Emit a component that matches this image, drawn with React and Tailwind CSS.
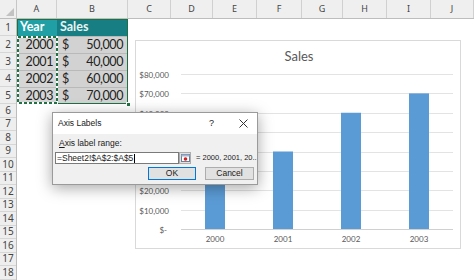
const cols = [
  ["A", "w-[40px]"],
  ["B", "w-[71px]"],
  ["C", "w-[43px]"],
  ["D", "w-[42px]"],
  ["E", "w-[44px]"],
  ["F", "w-[45px]"],
  ["G", "w-[41px]"],
  ["H", "w-[44px]"],
  ["I", "w-[44px]"],
  ["J", "w-[43px]"],
];

const data = [
  ["2000", "50,000", 50000],
  ["2001", "40,000", 40000],
  ["2002", "60,000", 60000],
  ["2003", "70,000", 70000],
];

const rowNums = Array.from({ length: 18 }, (_, i) => i + 1);

function SalesChart() {
  const labels = ["$80,000", "$70,000", "$60,000", "$50,000", "$40,000", "$30,000", "$20,000", "$10,000", "$-"];
  const step = 19.375;
  const base = 33 + 8 * step;
  return (
    <svg width="326" height="209" className="block" style={{ fontFamily: "Lato, 'Open Sans', sans-serif" }}>
      <text x="163" y="20" textAnchor="middle" fontSize="13" fill="#595959">
        Sales
      </text>
      {labels.map((l, i) => {
        const y = Math.round(33 + i * step) + 0.5;
        return (
          <g key={l}>
            <line x1="45" x2="317" y1={y} y2={y} stroke={i === 8 ? "#d0d0d0" : "#e3e3e3"} strokeWidth="1" />
            <text x={i === 8 ? 31 : 33} y={y + 3} textAnchor="end" fontSize="8" fill="#595959">
              {l}
            </text>
          </g>
        );
      })}
      {data.map(([year, , v], i) => {
        const cx = 79 + i * 68;
        const h = (v / 80000) * 155;
        return (
          <g key={year}>
            <rect x={cx - 10} y={base - h} width="20" height={h} fill="#5b9bd5" />
            <text x={cx} y="201" textAnchor="middle" fontSize="8" fill="#595959">
              {year}
            </text>
          </g>
        );
      })}
    </svg>
  );
}

function AxisDialog() {
  return (
    <div
      className="absolute left-[52px] top-[112px] w-[206px] h-[73px] flex flex-col border border-[#9a9a9a] bg-white shadow-[0_3px_14px_rgba(0,0,0,0.35)] text-[#1a1a1a]"
      style={{ fontFamily: "'Liberation Sans', Arial, sans-serif" }}
    >
      <div className="h-[21px] flex items-center pl-[5px] pr-[9px] text-[8.5px]">
        <span className="flex-1">Axis Labels</span>
        <span className="mr-[25px] text-[9px]">?</span>
        <svg width="9" height="9" viewBox="0 0 9 9">
          <path d="M0.5 0.5 L8.5 8.5 M8.5 0.5 L0.5 8.5" stroke="#333" strokeWidth="1" />
        </svg>
      </div>
      <div className="flex-1 bg-[#f0f0f0] flex flex-col pl-[2px] pt-[3px] overflow-hidden">
        <div className="pl-[4px] h-[12px] text-[8.5px] leading-[12px]">
          <span className="underline">A</span>xis label range:
        </div>
        <div className="flex items-center mt-[3px] h-[12px] shrink-0">
          <div className="w-[124px] h-[12px] shrink-0 bg-white border border-[#7a7a7a] flex items-center pl-[1px] text-[8.5px] leading-none">
            =Sheet2!$A$2:$A$5
            <span className="ml-[1px] w-px h-[9px] bg-black" />
          </div>
          <div className="w-[12px] h-[12px] shrink-0 border border-[#adadad] bg-[#e1e1e1] flex items-center justify-center">
            <svg width="9" height="8" viewBox="0 0 9 8">
              <rect x="0.5" y="0.5" width="8" height="7" fill="#fff" stroke="#6b7f99" />
              <rect x="0.5" y="0.5" width="8" height="2" fill="#9fb6d4" />
              <circle cx="4.5" cy="5" r="1.8" fill="#d42020" />
            </svg>
          </div>
          <span className="ml-[5px] text-[7.5px] leading-none whitespace-nowrap">= 2000, 2001, 20..</span>
        </div>
        <div className="flex mt-[3px] ml-[93px] gap-[9px] text-[8.5px] leading-none">
          <div className="w-[48px] h-[13px] border border-[#0078d7] bg-[#e1e1e1] flex items-center justify-center">OK</div>
          <div className="w-[49px] h-[13px] border border-[#adadad] bg-[#e1e1e1] flex items-center justify-center">Cancel</div>
        </div>
      </div>
    </div>
  );
}

export default function App() {
  return (
    <div className="relative w-[474px] h-[280px] overflow-hidden bg-white" style={{ fontFamily: "Lato, 'Open Sans', sans-serif" }}>
      {/* column headers */}
      <div className="flex h-[19px] bg-[#efefef] border-b border-[#bdbdbd] text-[9px] text-[#444]" style={{ fontFamily: "'Noto Sans', sans-serif" }}>
        <div className="w-[17px] border-r border-[#c6c6c6] relative">
          <svg width="8" height="8" className="absolute right-[2px] bottom-[2px]">
            <path d="M8 0 L8 8 L0 8 Z" fill="#c2c2c2" />
          </svg>
        </div>
        {cols.map(([c, w]) => (
          <div key={c} className={`${w} flex items-center justify-center border-r border-[#d0d0d0]`}>
            {c}
          </div>
        ))}
      </div>

      <div className="flex">
        {/* row headers */}
        <div className="w-[17px] flex flex-col bg-[#eeeeee] border-r border-[#bdbdbd] text-[10px] text-[#444]" style={{ fontFamily: "'Noto Sans', sans-serif" }}>
          {rowNums.map((n) => (
            <div
              key={n}
              className={`${n <= 5 ? "h-[17px]" : "h-[13.5px]"} flex items-center justify-center border-b border-[#d6d6d6]`}
            >
              {n}
            </div>
          ))}
        </div>

        {/* data block A1:B5 */}
        <div className="relative w-[111px] h-[85px] grid grid-cols-[40px_71px] grid-rows-[17px_repeat(4,17px)] text-[12.5px] tracking-[-0.4px] text-[#222]">
          <div className="bg-[#20a0a5] text-white font-bold flex items-center pl-[3px] tracking-normal">Year</div>
          <div className="bg-[#177f84] text-[#e8f4f4] font-bold flex items-center pl-[3px] tracking-normal">Sales</div>
          {data.map(([y, s]) => (
            <div key={y} className="contents">
              <div className="bg-[#d6d6d6] border-t border-[#b9b9b9] flex items-center justify-end pr-[4px]">{y}</div>
              <div className="bg-[#d2d2d2] border-t border-[#b9b9b9] flex items-center justify-between pl-[5px] pr-[5px]">
                <span>$</span>
                <span>{s}</span>
              </div>
            </div>
          ))}
          <div className="absolute inset-0 border border-[#1e7145] pointer-events-none" />
          <svg className="absolute left-0 top-[17px] pointer-events-none" width="41" height="68">
            <rect x="1" y="1" width="39" height="66" fill="none" stroke="#ffffff" strokeWidth="2" />
            <rect x="1" y="1" width="39" height="66" fill="none" stroke="#217346" strokeWidth="2" strokeDasharray="3 2" />
          </svg>
          <div className="absolute right-[-3px] bottom-[-3px] w-[5px] h-[5px] bg-[#217346] border border-white" />
        </div>
      </div>

      {/* chart object */}
      <div className="absolute left-[135px] top-[40px] w-[326px] h-[209px] bg-white border border-[#d9d9d9]">
        <SalesChart />
      </div>

      <AxisDialog />
    </div>
  );
}
